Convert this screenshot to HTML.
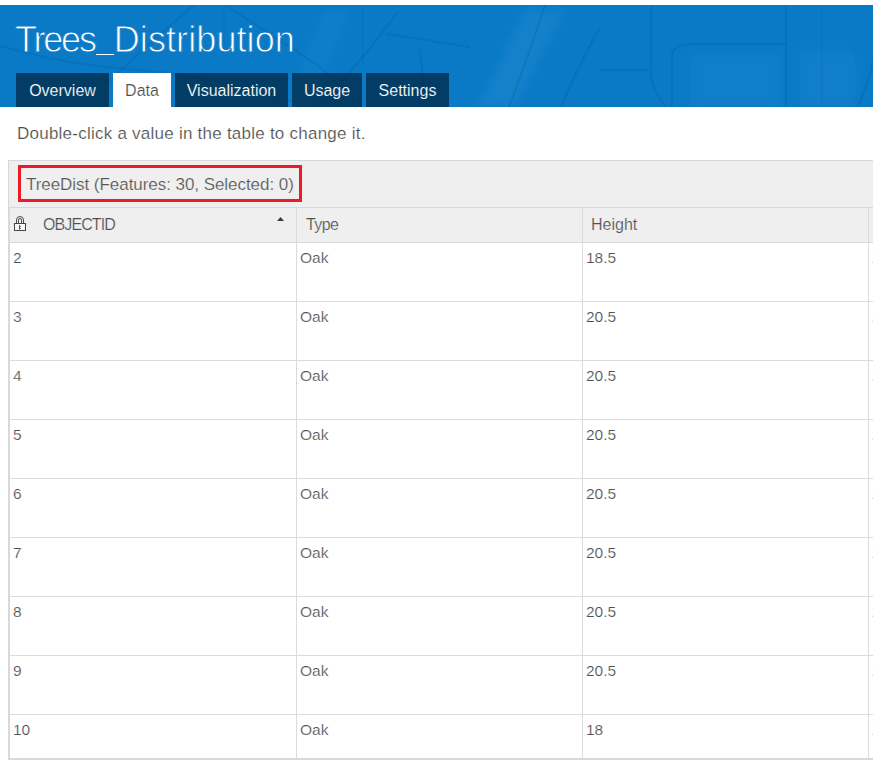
<!DOCTYPE html>
<html>
<head>
<meta charset="utf-8">
<style>
html,body{margin:0;padding:0;background:#fff;width:873px;height:767px;overflow:hidden;position:relative;font-family:"Liberation Sans",sans-serif;}
.abs{position:absolute;white-space:nowrap;}
#hdr{position:absolute;left:0;top:5px;width:873px;height:102px;background:#0a7ac7;overflow:hidden;}
#title{position:absolute;left:15px;top:17px;font-size:36px;line-height:36px;letter-spacing:0px;color:#fff;white-space:nowrap;-webkit-text-stroke:0.9px #0a7ac7;paint-order:normal;}
.tab{position:absolute;top:68px;height:34px;background:rgba(0,25,42,0.62);color:#fff;-webkit-text-stroke:0.2px rgba(4,62,102,0.9);font-size:16px;line-height:36px;text-align:center;white-space:nowrap;}
.us{display:inline-block;width:18px;height:1px;background:#fff;margin:0 0 0 1px;vertical-align:baseline;position:relative;top:3px}
.tab.act{background:#fff;color:#4c4c4c;-webkit-text-stroke:0.2px #fff;}
#intro{left:17px;top:125px;font-size:17px;line-height:17px;letter-spacing:0.24px;color:#4c4c4c;-webkit-text-stroke:0.2px #fff;}
#bar{position:absolute;left:8px;top:160px;width:900px;height:46px;background:#efefef;border-top:1px solid #d8d8d8;border-left:1px solid #d8d8d8;}
#red{position:absolute;left:18px;top:165px;width:278px;height:31px;border:3px solid #ec1c24;}
#bartext{left:26px;top:176px;font-size:17px;line-height:17px;letter-spacing:-0.05px;color:#555;-webkit-text-stroke:0.2px #efefef;}
#grid{position:absolute;left:8px;top:207px;width:900px;height:550px;border-left:2px solid #d9d9d9;border-bottom:2px solid #d9d9d9;border-top:1px solid #d9d9d9;overflow:hidden;background:#fff;}
#ghead{position:absolute;left:0;top:0;width:900px;height:34px;background:#efefef;border-bottom:1px solid #d9d9d9;}
.vl{position:absolute;width:1px;background:#dcdcdc;top:0;height:551px;}
.hl{position:absolute;height:1px;background:#dcdcdc;left:0;width:900px;}
.th{position:absolute;font-size:16px;line-height:15px;color:#4f4f4f;top:9px;white-space:nowrap;-webkit-text-stroke:0.2px #efefef;}
.td{position:absolute;font-size:15.5px;line-height:15px;color:#4f4f4f;white-space:nowrap;-webkit-text-stroke:0.2px #fff;}
</style>
</head>
<body>
<div id="hdr">
  <svg width="873" height="102" style="position:absolute;left:0;top:0" viewBox="0 0 873 102">
    <defs><filter id="bl" x="-5%" y="-5%" width="110%" height="110%"><feGaussianBlur stdDeviation="0.7"/></filter>
    <filter id="bl2"><feGaussianBlur stdDeviation="4"/></filter></defs>
    <g fill="#2a92d8" fill-opacity="0.25" stroke="none" filter="url(#bl2)">
      <path d="M478 102 L525 5 L565 5 L515 102 Z"/>
      <path d="M285 102 L325 5 L350 5 L310 102 Z" fill-opacity="0.15"/>
      <path d="M690 50 L780 50 L780 102 L690 102 Z" fill-opacity="0.18"/>
      <path d="M800 45 L850 45 C860 60 860 90 850 102 L800 102 Z" fill-opacity="0.18"/>
    </g>
    <g fill="none" stroke="#04609f" stroke-opacity="0.32" stroke-width="2" filter="url(#bl)">
      <path d="M-5 40 C30 48 60 60 150 66 C200 70 250 85 300 98"/>
      <path d="M196 -2 L150 38 L105 80"/>
      <path d="M222 -2 C260 22 290 42 320 62 L362 104"/>
      <path d="M398 6 C380 32 350 68 318 104"/>
      <path d="M386 29 C410 32 430 36 470 42"/>
      <path d="M420 45 L426 104"/>
      <path d="M546 -2 C534 30 526 60 508 104"/>
      <path d="M600 22 C585 50 570 80 560 104"/>
      <path d="M651 -2 L651 65 C651 85 660 95 668 104"/>
      <path d="M600 65 L650 65"/>
      <path d="M672 104 L672 50 C672 43 680 39 690 39 L786 39"/>
      <path d="M786 -2 L786 104"/>
      <path d="M822 -2 L822 104" stroke-opacity="0.15"/>
      <path d="M873 57 C868 80 862 92 857 104"/>
      <path d="M363 -2 L363 60" stroke-opacity="0.15"/>
      <path d="M224 -2 L224 40" stroke-opacity="0.15"/>
    </g>
  </svg>
  <div id="title"><span style="letter-spacing:-2.2px">Trees</span><span class="us"></span><span style="letter-spacing:0.1px">Distribution</span></div>
  <div class="tab" style="left:16px;width:93px;">Overview</div>
  <div class="tab act" style="left:113px;width:58px;">Data</div>
  <div class="tab" style="left:175px;width:113px;">Visualization</div>
  <div class="tab" style="left:292px;width:70px;">Usage</div>
  <div class="tab" style="left:366px;width:83px;">Settings</div>
</div>
<div id="intro" class="abs">Double-click a value in the table to change it.</div>
<div id="bar"></div>
<div id="red"></div>
<div id="bartext" class="abs">TreeDist (Features: 30, Selected: 0)</div>
<div id="grid">
  <div id="ghead"></div>
  <div class="vl" style="left:286px"></div>
  <div class="vl" style="left:572px"></div>
  <div class="vl" style="left:858px"></div>
  <div class="hl" style="top:93px"></div>
  <div class="hl" style="top:152px"></div>
  <div class="hl" style="top:211px"></div>
  <div class="hl" style="top:270px"></div>
  <div class="hl" style="top:329px"></div>
  <div class="hl" style="top:388px"></div>
  <div class="hl" style="top:447px"></div>
  <div class="hl" style="top:506px"></div>

  <svg style="position:absolute;left:4px;top:8px" width="13" height="16" viewBox="0 0 13 16">
    <path d="M2.5 8 V4 A3.5 3.5 0 0 1 9.5 4 V8" fill="none" stroke="#4a4a4a" stroke-width="1"/>
    <path d="M4.5 8 V4 A1.5 1.5 0 0 1 7.5 4 V8" fill="none" stroke="#4a4a4a" stroke-width="1"/>
    <rect x="0.5" y="7.5" width="11" height="7" fill="#f8f8f8" stroke="#444" stroke-width="1"/>
    <path d="M5.5 9 V13.5 M5.5 10 L6.8 10.8 M5.5 12 L6.8 12.8" fill="none" stroke="#555" stroke-width="1"/>
  </svg>
  <div class="th" style="left:33px;letter-spacing:-0.9px">OBJECTID</div>
  <svg style="position:absolute;left:267px;top:9px" width="7" height="4"><path d="M0 4 L3.5 0 L7 4 Z" fill="#3c3c3c"/></svg>
  <div class="th" style="left:296px;letter-spacing:-0.6px">Type</div>
  <div class="th" style="left:581px">Height</div>
  <div class="td" style="left:3px;top:42px">2</div>
  <div class="td" style="left:290px;top:42px">Oak</div>
  <div class="td" style="left:576px;top:42px">18.5</div>
  <div class="td" style="left:862px;top:42px">2</div>
  <div class="td" style="left:3px;top:101px">3</div>
  <div class="td" style="left:290px;top:101px">Oak</div>
  <div class="td" style="left:576px;top:101px">20.5</div>
  <div class="td" style="left:862px;top:101px">2</div>
  <div class="td" style="left:3px;top:160px">4</div>
  <div class="td" style="left:290px;top:160px">Oak</div>
  <div class="td" style="left:576px;top:160px">20.5</div>
  <div class="td" style="left:862px;top:160px">2</div>
  <div class="td" style="left:3px;top:219px">5</div>
  <div class="td" style="left:290px;top:219px">Oak</div>
  <div class="td" style="left:576px;top:219px">20.5</div>
  <div class="td" style="left:862px;top:219px">2</div>
  <div class="td" style="left:3px;top:278px">6</div>
  <div class="td" style="left:290px;top:278px">Oak</div>
  <div class="td" style="left:576px;top:278px">20.5</div>
  <div class="td" style="left:862px;top:278px">2</div>
  <div class="td" style="left:3px;top:337px">7</div>
  <div class="td" style="left:290px;top:337px">Oak</div>
  <div class="td" style="left:576px;top:337px">20.5</div>
  <div class="td" style="left:862px;top:337px">2</div>
  <div class="td" style="left:3px;top:396px">8</div>
  <div class="td" style="left:290px;top:396px">Oak</div>
  <div class="td" style="left:576px;top:396px">20.5</div>
  <div class="td" style="left:862px;top:396px">2</div>
  <div class="td" style="left:3px;top:455px">9</div>
  <div class="td" style="left:290px;top:455px">Oak</div>
  <div class="td" style="left:576px;top:455px">20.5</div>
  <div class="td" style="left:862px;top:455px">2</div>
  <div class="td" style="left:3px;top:514px">10</div>
  <div class="td" style="left:290px;top:514px">Oak</div>
  <div class="td" style="left:576px;top:514px">18</div>
  <div class="td" style="left:862px;top:514px">2</div>

</div>
</body>
</html>
